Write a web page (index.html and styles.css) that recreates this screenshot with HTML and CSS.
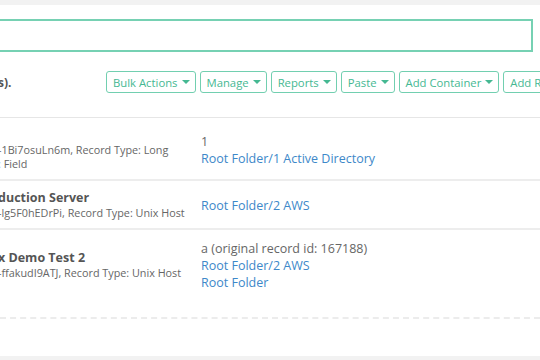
FILE: index.html
```html
<!DOCTYPE html>
<html lang="en">
<head>
    <meta charset="UTF-8">
    <title>Vault Records</title>
    <link rel="stylesheet" href="styles.css">
</head>
<body>
    <div class="painel">
        <div class="busca">
            <input class="campo" type="text">
        </div>

        <div class="barra">
            <span class="contagem">s).</span>
            <div class="botoes">
                <button class="btn">Bulk Actions <span class="seta"></span></button>
                <button class="btn">Manage <span class="seta"></span></button>
                <button class="btn">Reports <span class="seta"></span></button>
                <button class="btn">Paste <span class="seta"></span></button>
                <button class="btn">Add Container <span class="seta"></span></button>
                <button class="btn">Add Record <span class="seta"></span></button>
            </div>
        </div>

        <div class="tabela">
            <div class="linha">
                <div class="col-registro">
                    <div class="titulo">&nbsp;</div>
                    <div class="info">-1Bi7osuLn6m, Record Type: Long</div>
                    <div class="info">: Field</div>
                </div>
                <div class="col-pasta">
                    <div class="texto">1</div>
                    <a href="#" class="link">Root Folder/1 Active Directory</a>
                </div>
            </div>

            <div class="linha">
                <div class="col-registro">
                    <div class="titulo">duction Server</div>
                    <div class="info">-lg5F0hEDrPi, Record Type: Unix Host</div>
                </div>
                <div class="col-pasta">
                    <a href="#" class="link">Root Folder/2 AWS</a>
                </div>
            </div>

            <div class="linha ultima">
                <div class="col-registro">
                    <div class="titulo">x Demo Test 2</div>
                    <div class="info">-ffakudI9ATJ, Record Type: Unix Host</div>
                </div>
                <div class="col-pasta">
                    <div class="texto">a (original record id: 167188)</div>
                    <a href="#" class="link">Root Folder/2 AWS</a>
                    <a href="#" class="link">Root Folder</a>
                </div>
            </div>
        </div>
    </div>
</body>
</html>
```
FILE: styles.css
```css
body {
    margin: 0;
    height: 360px;
    overflow: hidden;
    background-color: #f2f2f2;
    font-family: "Open Sans", "Liberation Sans", sans-serif;
    color: #666666;
}

.painel {
    margin-top: 5px;
    height: 351px;
    background-color: #ffffff;
}

.busca {
    padding-top: 14px;
}

.campo {
    display: block;
    box-sizing: border-box;
    width: 544px;
    height: 33px;
    margin-left: -11px;
    border: 2px solid #76d1b3;
    outline: none;
}

.barra {
    display: flex;
    align-items: center;
    margin-top: 19px;
    height: 22px;
}

.contagem {
    flex-shrink: 0;
    width: 106px;
    margin-left: -2px;
    font-size: 12px;
    font-weight: bold;
    color: #555555;
}

.botoes {
    display: flex;
    flex-shrink: 0;
    gap: 4px;
    margin-left: 2px;
}

.btn {
    display: flex;
    align-items: center;
    gap: 4px;
    height: 22px;
    padding: 0 5px 0 6px;
    background: #ffffff;
    border: 1px solid #72cfb0;
    border-radius: 3px;
    font-family: "Open Sans", "Liberation Sans", sans-serif;
    font-size: 11.3px;
    color: #45b892;
    white-space: nowrap;
}

.seta {
    width: 0;
    height: 0;
    border-left: 4px solid transparent;
    border-right: 4px solid transparent;
    border-top: 4px solid #45b892;
}

.tabela {
    margin-top: 24px;
    border-top: 1px solid #e6e6e6;
}

.linha {
    display: flex;
    align-items: center;
    padding: 8px 0;
    border-bottom: 2px solid #ededed;
}

.linha.ultima {
    padding-bottom: 26px;
    border-bottom: 2px dashed #ececec;
}

.col-registro {
    width: 203px;
    margin-left: -2px;
}

.titulo {
    font-size: 12.5px;
    font-weight: bold;
    line-height: 17px;
    color: #555555;
}

.info {
    font-size: 10.8px;
    line-height: 14px;
    color: #666666;
}

.col-pasta {
    display: flex;
    flex-direction: column;
    font-size: 12.5px;
    line-height: 17px;
    padding-top: 2px;
}

.texto {
    color: #666666;
}

.link {
    color: #3d88c9;
    text-decoration: none;
}
```
